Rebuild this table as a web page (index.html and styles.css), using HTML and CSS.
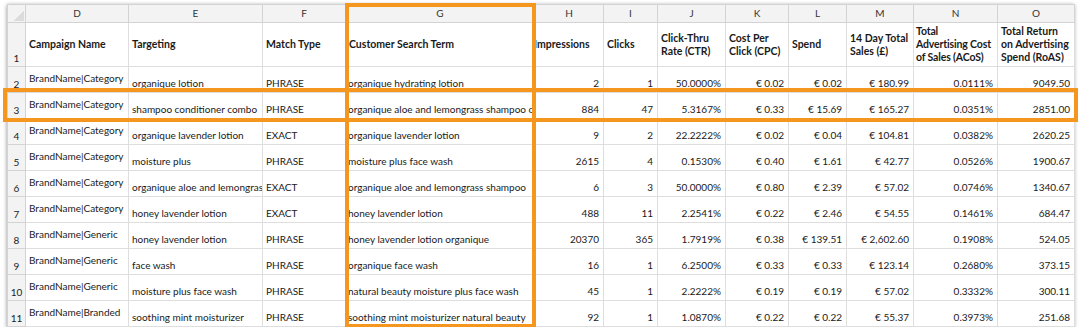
FILE: index.html
```html
<!DOCTYPE html>
<html>
<head>
<meta charset="utf-8">
<link rel="stylesheet" href="styles.css">
</head>
<body>
<div class="sheet">
<table class="grid">
<colgroup>
<col class="w-rn"><col class="w-d"><col class="w-e"><col class="w-f"><col class="w-g"><col class="w-h"><col class="w-i"><col class="w-j"><col class="w-k"><col class="w-l"><col class="w-m"><col class="w-n"><col class="w-o">
</colgroup>
<thead>
<tr class="letters">
<th class="corner"></th><th>D</th><th>E</th><th>F</th><th>G</th><th>H</th><th>I</th><th>J</th><th>K</th><th>L</th><th>M</th><th>N</th><th>O</th>
</tr>
</thead>
<tbody>
<tr class="head">
<td class="rn">1</td>
<td>Campaign Name</td>
<td>Targeting</td>
<td>Match Type</td>
<td>Customer Search Term</td>
<td class="imp">Impressions</td>
<td>Clicks</td>
<td>Click-Thru<br>Rate (CTR)</td>
<td>Cost Per<br>Click (CPC)</td>
<td>Spend</td>
<td>14 Day Total<br>Sales (£)</td>
<td class="tight">Total<br>Advertising Cost<br>of Sales (ACoS)</td>
<td>Total Return<br>on Advertising<br>Spend (RoAS)</td>
</tr>
<tr><td class="rn">2</td><td class="camp">BrandName|Category</td><td>organique lotion</td><td>PHRASE</td><td class="term">organique hydrating lotion</td><td class="num">2</td><td class="num">1</td><td class="num">50.0000%</td><td class="num">€ 0.02</td><td class="num">€ 0.02</td><td class="num">€ 180.99</td><td class="num">0.0111%</td><td class="num">9049.50</td></tr>
<tr><td class="rn">3</td><td class="camp">BrandName|Category</td><td>shampoo conditioner combo</td><td>PHRASE</td><td class="term">organique aloe and lemongrass shampoo conditioner</td><td class="num">884</td><td class="num">47</td><td class="num">5.3167%</td><td class="num">€ 0.33</td><td class="num">€ 15.69</td><td class="num">€ 165.27</td><td class="num">0.0351%</td><td class="num">2851.00</td></tr>
<tr><td class="rn">4</td><td class="camp">BrandName|Category</td><td>organique lavender lotion</td><td>EXACT</td><td class="term">organique lavender lotion</td><td class="num">9</td><td class="num">2</td><td class="num">22.2222%</td><td class="num">€ 0.02</td><td class="num">€ 0.04</td><td class="num">€ 104.81</td><td class="num">0.0382%</td><td class="num">2620.25</td></tr>
<tr><td class="rn">5</td><td class="camp">BrandName|Category</td><td>moisture plus</td><td>PHRASE</td><td class="term">moisture plus face wash</td><td class="num">2615</td><td class="num">4</td><td class="num">0.1530%</td><td class="num">€ 0.40</td><td class="num">€ 1.61</td><td class="num">€ 42.77</td><td class="num">0.0526%</td><td class="num">1900.67</td></tr>
<tr><td class="rn">6</td><td class="camp">BrandName|Category</td><td>organique aloe and lemongrass shampoo</td><td>EXACT</td><td class="term">organique aloe and lemongrass shampoo</td><td class="num">6</td><td class="num">3</td><td class="num">50.0000%</td><td class="num">€ 0.80</td><td class="num">€ 2.39</td><td class="num">€ 57.02</td><td class="num">0.0746%</td><td class="num">1340.67</td></tr>
<tr><td class="rn">7</td><td class="camp">BrandName|Category</td><td>honey lavender lotion</td><td>EXACT</td><td class="term">honey lavender lotion</td><td class="num">488</td><td class="num">11</td><td class="num">2.2541%</td><td class="num">€ 0.22</td><td class="num">€ 2.46</td><td class="num">€ 54.55</td><td class="num">0.1461%</td><td class="num">684.47</td></tr>
<tr><td class="rn">8</td><td class="camp">BrandName|Generic</td><td>honey lavender lotion</td><td>PHRASE</td><td class="term">honey lavender lotion organique</td><td class="num">20370</td><td class="num">365</td><td class="num">1.7919%</td><td class="num">€ 0.38</td><td class="num">€ 139.51</td><td class="num">€ 2,602.60</td><td class="num">0.1908%</td><td class="num">524.05</td></tr>
<tr><td class="rn">9</td><td class="camp">BrandName|Generic</td><td>face wash</td><td>PHRASE</td><td class="term">organique face wash</td><td class="num">16</td><td class="num">1</td><td class="num">6.2500%</td><td class="num">€ 0.33</td><td class="num">€ 0.33</td><td class="num">€ 123.14</td><td class="num">0.2680%</td><td class="num">373.15</td></tr>
<tr><td class="rn">10</td><td class="camp">BrandName|Generic</td><td>moisture plus face wash</td><td>PHRASE</td><td class="term">natural beauty moisture plus face wash</td><td class="num">45</td><td class="num">1</td><td class="num">2.2222%</td><td class="num">€ 0.19</td><td class="num">€ 0.19</td><td class="num">€ 57.02</td><td class="num">0.3332%</td><td class="num">300.11</td></tr>
<tr><td class="rn">11</td><td class="camp">BrandName|Branded</td><td>soothing mint moisturizer</td><td>PHRASE</td><td class="term">soothing mint moisturizer natural beauty</td><td class="num">92</td><td class="num">1</td><td class="num">1.0870%</td><td class="num">€ 0.22</td><td class="num">€ 0.22</td><td class="num">€ 55.37</td><td class="num">0.3973%</td><td class="num">251.68</td></tr>
</tbody>
</table>
<div class="hl hl-col"></div>
<div class="hl hl-row"></div>
</div>
</body>
</html>
```

FILE: styles.css
```css
html, body {
  margin: 0;
  padding: 0;
  background: #ffffff;
}
body {
  padding: 4px 0 0 7px;
  font-family: Lato, "Open Sans", sans-serif;
  font-size: 10px;
  color: #1a1a1a;
}
.sheet {
  position: relative;
  width: 1067px;
  box-shadow: 0 1px 4px rgba(0, 0, 0, 0.45);
  background: #fff;
}
.grid {
  border-collapse: collapse;
  table-layout: fixed;
  width: 1067px;
}
.w-rn { width: 18px; }
.w-d { width: 103px; }
.w-e { width: 134px; }
.w-f { width: 83px; }
.w-g { width: 189px; }
.w-h { width: 69px; }
.w-i { width: 54px; }
.w-j { width: 68px; }
.w-k { width: 63px; }
.w-l { width: 58px; }
.w-m { width: 67px; }
.w-n { width: 84px; }
.w-o { width: 77px; }

.grid td, .grid th {
  border: 1px solid #dedede;
  padding: 0 4px 2px 3px;
  white-space: nowrap;
  overflow: hidden;
  line-height: 13px;
  text-align: left;
  vertical-align: bottom;
}
.letters th {
  height: 17px;
  background: #f3f3f3;
  border-color: #d3d3d3;
  font-weight: normal;
  font-size: 10px;
  color: #333;
  text-align: center;
  vertical-align: middle;
  padding: 0;
}
.letters th.corner {
  background: linear-gradient(135deg, #f3f3f3 50%, #dcdcdc 50%);
  background-size: 10px 10px;
  background-repeat: no-repeat;
  background-position: right 1px bottom 1px;
  background-color: #f3f3f3;
}
.grid td.rn {
  background: #f3f3f3;
  border-color: #d3d3d3;
  text-align: center;
  padding: 0 0 1px 0;
  font-size: 10px;
  color: #222;
}
.head td {
  height: 42px;
  font-weight: bold;
  font-size: 10.5px;
  vertical-align: middle;
  padding: 0 1px 0 3px;
}
.head td.tight {
  padding-left: 2px;
  padding-right: 0;
  letter-spacing: -0.15px;
}
.head td.rn {
  vertical-align: bottom;
  font-weight: normal;
  font-size: 10px;
  padding-bottom: 1px;
}
.head td.imp {
  overflow: visible;
  text-indent: -1px;
  padding-left: 0;
}
tbody tr { height: 26px; }
.grid td.camp {
  vertical-align: middle;
  padding-bottom: 3px;
}
.grid td.term {
  padding-left: 2px;
}
.grid td.num {
  text-align: right;
}

.hl {
  position: absolute;
  border: 4px solid #f5961f;
  pointer-events: none;
}
.hl-col {
  left: 338px;
  top: -1px;
  width: 183px;
  height: 317px;
}
.hl-row {
  left: -4px;
  top: 84px;
  width: 1067px;
  height: 26px;
}
```
